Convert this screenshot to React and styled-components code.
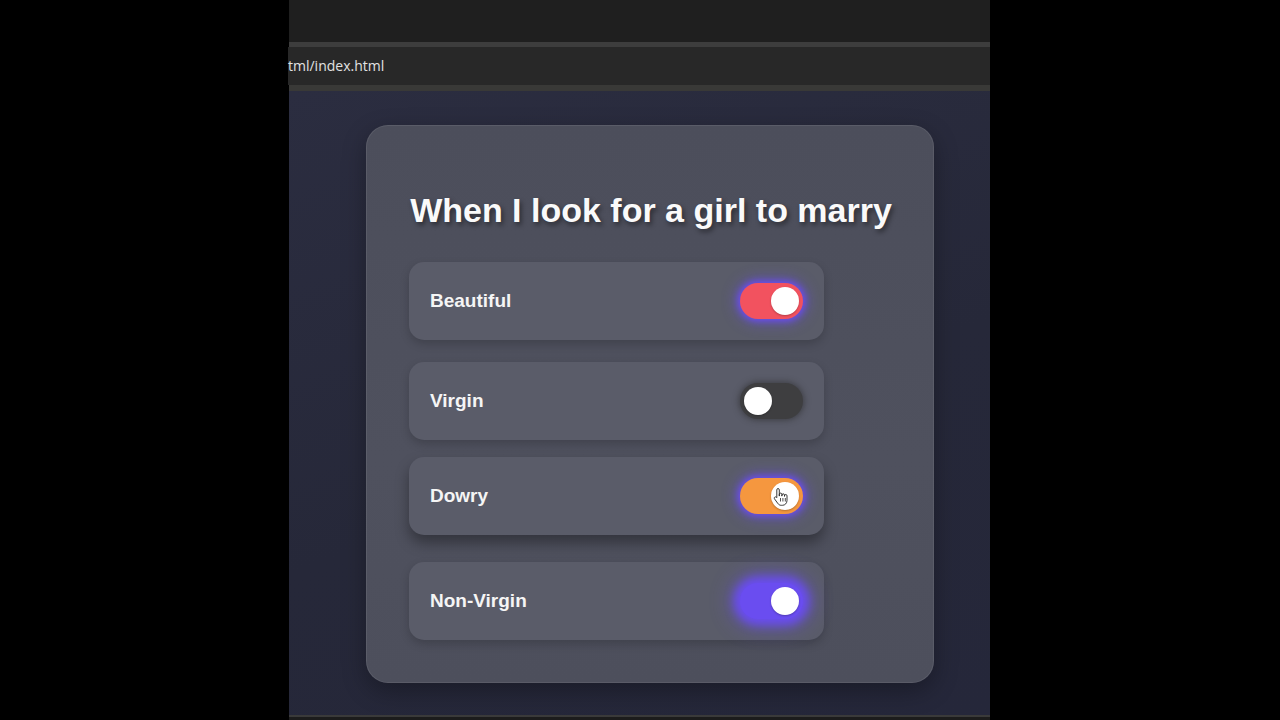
import React, { useState } from 'react'
import styled, { createGlobalStyle } from 'styled-components'

const GlobalStyle = createGlobalStyle`
    html, body {
        margin: 0;
        padding: 0;
        background: #000;
        width: 1280px;
        height: 720px;
        overflow: hidden;
    }
`

const items = [
    { label: 'Beautiful', color: '#f2525f', on: true, glow: true },
    { label: 'Virgin', color: '#3e3e40', on: false, glow: false },
    { label: 'Dowry', color: '#f5973f', on: true, glow: true, hover: true },
    { label: 'Non-Virgin', color: '#6a4df0', on: true, glow: true, blur: true },
]

export default function App() {
    const [state, setState] = useState(items)

    const handleToggle = (index) => {
        setState(state.map((item, i) => i === index ? { ...item, on: !item.on } : item))
    }

    return (
        <>
            <GlobalStyle />
            <Screen>
                <Browser>
                    <TabStrip />
                    <Rule />
                    <AddressBar>tml/index.html</AddressBar>
                    <Rule $dim />
                    <Page>
                        <Card>
                            <Title>When I look for a girl to marry</Title>
                            <List>
                                {state.map((item, i) => (
                                    <Row key={item.label} $hover={item.hover}>
                                        <Label>{item.label}</Label>
                                        <Switch
                                            $color={item.color}
                                            $on={item.on}
                                            $glow={item.glow}
                                            $blur={item.blur}
                                            onClick={() => handleToggle(i)}
                                        >
                                            <Knob $on={item.on} />
                                            {item.hover && <Pointer />}
                                        </Switch>
                                    </Row>
                                ))}
                            </List>
                        </Card>
                    </Page>
                    <BottomEdge />
                </Browser>
            </Screen>
        </>
    )
}

function Pointer() {
    return (
        <PointerIcon viewBox="0 0 16 20" width="16" height="20">
            <path
                d="M5 1.5c.8 0 1.3.6 1.3 1.4v6.2V7.4c0-.8.6-1.3 1.3-1.3s1.3.5 1.3 1.3v1.7-1c0-.8.6-1.3 1.3-1.3s1.3.5 1.3 1.3v1.3-.6c0-.8.6-1.3 1.3-1.3s1.2.5 1.2 1.3v4.6c0 2.8-1.9 4.9-4.6 4.9H8.3c-1.6 0-2.6-.7-3.5-1.9L1.6 12c-.5-.7-.4-1.5.2-1.9.6-.4 1.4-.2 1.9.4l.1.2V2.9c0-.8.5-1.4 1.2-1.4z"
                fill="#fff"
                stroke="#222"
                strokeWidth="0.9"
                strokeLinejoin="round"
            />
            <path d="M7.5 11v3.5M9.9 11v3.5M12.3 11v3.5" stroke="#222" strokeWidth="0.8" />
        </PointerIcon>
    )
}

const Screen = styled.div`
    width: 1280px;
    height: 720px;
    display: flex;
    justify-content: flex-start;
    padding-left: 289px;
    box-sizing: border-box;
    background: #000;
`

const Browser = styled.div`
    width: 701px;
    height: 720px;
    display: flex;
    flex-direction: column;
    background: #1c1c1c;
`

const TabStrip = styled.div`
    height: 42px;
    background: #1f1f1f;
`

const Rule = styled.div`
    height: ${props => props.$dim ? '6px' : '5px'};
    background: ${props => props.$dim ? '#393937' : '#3d3d3d'};
`

const AddressBar = styled.div`
    height: 38px;
    background: #282828;
    color: #e2e2e2;
    font-family: "Open Sans", "Noto Sans", sans-serif;
    font-size: 14px;
    line-height: 38px;
    margin-left: -1px;
`

const Page = styled.div`
    height: 624px;
    box-sizing: border-box;
    padding: 34px 0 0 77px;
    background: linear-gradient(160deg, #2b2d40 0%, #262839 55%, #25273a 100%);
`

const BottomEdge = styled.div`
    height: 2px;
    background: #3a3a3a;
`

const Card = styled.div`
    width: 568px;
    height: 558px;
    box-sizing: border-box;
    padding: 64px 0 0 42px;
    border-radius: 22px;
    background: linear-gradient(180deg, #4c4e5b 0%, #4f515e 60%, #4d4f5c 100%);
    border: 1px solid rgba(255, 255, 255, 0.08);
    box-shadow: 0 8px 24px rgba(0, 0, 0, 0.3);
`

const Title = styled.h1`
    margin: 0 0 31px;
    width: 484px;
    text-align: center;
    font-family: "Liberation Sans", Arial, sans-serif;
    font-weight: 700;
    font-size: 34px;
    line-height: 41px;
    color: #fafafa;
    text-shadow: 2px 3px 5px rgba(0, 0, 0, 0.45);
`

const List = styled.div`
    display: flex;
    flex-direction: column;
    gap: 22px;
`

const Row = styled.div`
    width: 415px;
    height: 78px;
    box-sizing: border-box;
    padding: 0 21px;
    display: flex;
    align-items: center;
    justify-content: space-between;
    border-radius: 15px;
    background: #5a5c69;
    box-shadow: ${props => props.$hover
        ? '0 8px 14px rgba(0, 0, 0, 0.35)'
        : '0 4px 10px rgba(0, 0, 0, 0.18)'};
    transform: ${props => props.$hover ? 'translateY(-5px)' : 'none'};
`

const Label = styled.span`
    font-family: "Liberation Sans", Arial, sans-serif;
    font-weight: 700;
    font-size: 19px;
    color: #f5f5f5;
`

const Switch = styled.div`
    position: relative;
    width: 63px;
    height: 36px;
    border-radius: 18px;
    background: ${props => props.$color};
    cursor: pointer;
    box-shadow: ${props => props.$blur
        ? '0 0 10px 6px #6a4df0, 0 0 20px 10px rgba(106, 77, 240, 0.45)'
        : props.$glow
            ? '0 0 6px 2px #6a4df0, 0 0 14px 5px rgba(106, 77, 240, 0.45)'
            : '0 0 6px 1px rgba(40, 40, 40, 0.6)'};
`

const Knob = styled.div`
    position: absolute;
    top: 4px;
    left: ${props => props.$on ? '31px' : '4px'};
    width: 28px;
    height: 28px;
    border-radius: 50%;
    background: #fff;
    box-shadow: 0 1px 2px rgba(0, 0, 0, 0.25);
`

const PointerIcon = styled.svg`
    position: absolute;
    left: 33px;
    top: 9px;
`
